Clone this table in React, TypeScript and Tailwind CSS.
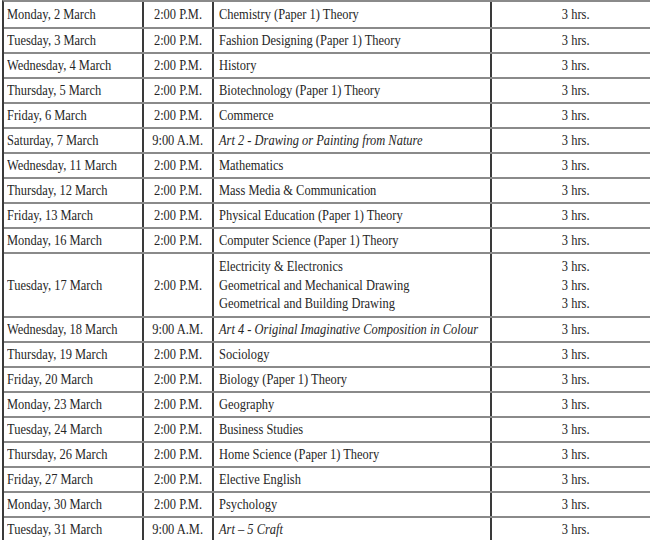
const rows: { day: string; time: string; subjects: string[]; italic?: boolean }[] = [
  { day: "Monday, 2 March", time: "2:00 P.M.", subjects: ["Chemistry (Paper 1) Theory"] },
  { day: "Tuesday, 3 March", time: "2:00 P.M.", subjects: ["Fashion Designing (Paper 1) Theory"] },
  { day: "Wednesday, 4 March", time: "2:00 P.M.", subjects: ["History"] },
  { day: "Thursday, 5 March", time: "2:00 P.M.", subjects: ["Biotechnology (Paper 1) Theory"] },
  { day: "Friday, 6 March", time: "2:00 P.M.", subjects: ["Commerce"] },
  { day: "Saturday, 7 March", time: "9:00 A.M.", subjects: ["Art 2 - Drawing or Painting from Nature"], italic: true },
  { day: "Wednesday, 11 March", time: "2:00 P.M.", subjects: ["Mathematics"] },
  { day: "Thursday, 12 March", time: "2:00 P.M.", subjects: ["Mass Media & Communication"] },
  { day: "Friday, 13 March", time: "2:00 P.M.", subjects: ["Physical Education (Paper 1) Theory"] },
  { day: "Monday, 16 March", time: "2:00 P.M.", subjects: ["Computer Science (Paper 1) Theory"] },
  {
    day: "Tuesday, 17 March",
    time: "2:00 P.M.",
    subjects: [
      "Electricity & Electronics",
      "Geometrical and Mechanical Drawing",
      "Geometrical and Building Drawing",
    ],
  },
  { day: "Wednesday, 18 March", time: "9:00 A.M.", subjects: ["Art 4 - Original Imaginative Composition in Colour"], italic: true },
  { day: "Thursday, 19 March", time: "2:00 P.M.", subjects: ["Sociology"] },
  { day: "Friday, 20 March", time: "2:00 P.M.", subjects: ["Biology (Paper 1) Theory"] },
  { day: "Monday, 23 March", time: "2:00 P.M.", subjects: ["Geography"] },
  { day: "Tuesday, 24 March", time: "2:00 P.M.", subjects: ["Business Studies"] },
  { day: "Thursday, 26 March", time: "2:00 P.M.", subjects: ["Home Science (Paper 1) Theory"] },
  { day: "Friday, 27 March", time: "2:00 P.M.", subjects: ["Elective English"] },
  { day: "Monday, 30 March", time: "2:00 P.M.", subjects: ["Psychology"] },
  { day: "Tuesday, 31 March", time: "9:00 A.M.", subjects: ["Art \u2013 5 Craft"], italic: true },
];

const T = ({ children, center, italic }: { children: React.ReactNode; center?: boolean; italic?: boolean }) => (
  <span
    className={`inline-block whitespace-nowrap scale-x-[0.83] ${center ? "origin-center" : "origin-left"} ${italic ? "italic" : ""}`}
  >
    {children}
  </span>
);

export default function App() {
  return (
    <div className="w-[650px] h-[540px] overflow-hidden bg-white pl-[2px] font-['Liberation_Serif',serif] text-[15px] leading-none text-[#262626]">
      <div className="w-[658px] border-l-2 border-l-[#3a3a3a] border-t-2 border-t-[#8a8a8a]">
        {rows.map((r, i) => {
          const tall = r.subjects.length > 1;
          const h = tall ? "h-[64px]" : i === 0 ? "h-[27px]" : "h-[25px]";
          return (
            <div
              key={r.day}
              className={`grid grid-cols-[138px_70px_278px_170px] border-b-2 border-b-[#8a8a8a] ${h}`}
            >
              <div className="flex items-center pl-[3px]">
                <T>{r.day}</T>
              </div>
              <div className="flex items-center justify-center border-l-2 border-l-[#3a3a3a]">
                <T center>{r.time}</T>
              </div>
              <div className="flex flex-col justify-center pl-[5px] border-l-2 border-l-[#3a3a3a] leading-[18.5px]">
                {r.subjects.map((s) => (
                  <div key={s}>
                    <T italic={r.italic}>{s}</T>
                  </div>
                ))}
              </div>
              <div className="flex flex-col items-center justify-center border-l-2 border-l-[#3a3a3a] leading-[18.5px]">
                {r.subjects.map((s) => (
                  <div key={s}>
                    <T center>3 hrs.</T>
                  </div>
                ))}
              </div>
            </div>
          );
        })}
      </div>
    </div>
  );
}
